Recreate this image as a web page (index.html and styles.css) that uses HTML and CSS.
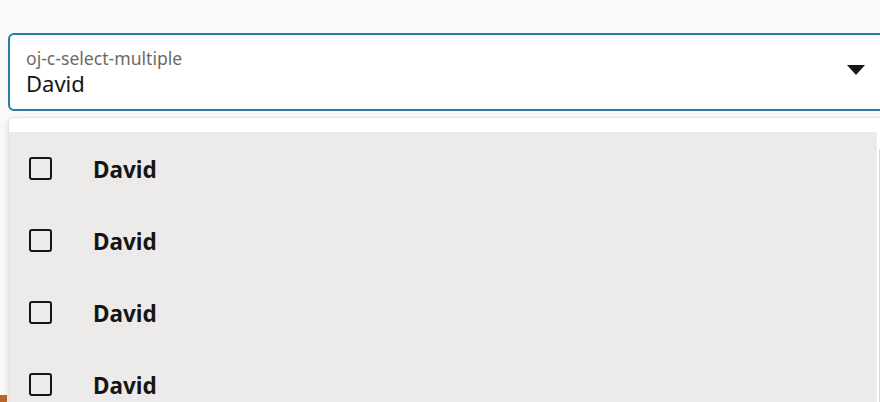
FILE: index.html
```html
<!DOCTYPE html>
<html lang="en">
<head>
<meta charset="utf-8">
<title>oj-c-select-multiple</title>
<link rel="stylesheet" href="styles.css">
</head>
<body>
<div class="page">
  <div class="field">
    <div class="field-text">
      <div class="field-label">oj-c-select-multiple</div>
      <div class="field-value">David</div>
    </div>
    <svg class="arrow" width="18" height="10" viewBox="0 0 18 10"><path d="M0 0 H18 L9 10 Z" fill="#161513"/></svg>
  </div>
  <div class="panel">
    <div class="list">
      <div class="row"><span class="check"></span><span class="name">David</span></div>
      <div class="row"><span class="check"></span><span class="name">David</span></div>
      <div class="row"><span class="check"></span><span class="name">David</span></div>
      <div class="row"><span class="check"></span><span class="name">David</span></div>
    </div>
    <div class="scroll"><div class="thumb"></div></div>
  </div>
  <div class="corner"></div>
</div>
</body>
</html>
```

FILE: styles.css
```css
html, body {
  margin: 0;
  padding: 0;
  background: #faf9f7;
  font-family: "Noto Sans", "Open Sans", sans-serif;
  color: #161513;
}
.page {
  position: relative;
  width: 880px;
  height: 402px;
  overflow: hidden;
  padding: 33px 0 0 8px;
  box-sizing: border-box;
}
.field {
  display: flex;
  align-items: center;
  width: 890px;
  height: 78px;
  box-sizing: border-box;
  border: 2px solid #267fa3;
  border-radius: 6px;
  background: #ffffff;
  padding: 0 31px 0 16px;
}
.field-text {
  flex: 1;
  display: flex;
  flex-direction: column;
  padding-top: 1px;
}
.field-label {
  font-size: 17.6px;
  line-height: 21px;
  color: #6b6a67;
}
.field-value {
  font-size: 22px;
  line-height: 28px;
  color: #161513;
}
.arrow {
  display: block;
  margin-top: -4px;
}
.panel {
  display: flex;
  margin-top: 6px;
  width: 890px;
  height: 300px;
  box-sizing: border-box;
  background: #ffffff;
  border: 1px solid #e6e5e2;
  border-radius: 6px 6px 0 0;
  box-shadow: 0 2px 6px rgba(0,0,0,0.12);
  padding-top: 14px;
}
.list {
  width: 868px;
  background: #ecebe9;
}
.row {
  display: flex;
  align-items: center;
  height: 72px;
  padding-left: 20px;
}
.check {
  width: 23px;
  height: 23px;
  box-sizing: border-box;
  border: 2px solid #161513;
  border-radius: 3px;
  margin-right: 41px;
}
.name {
  font-size: 22.5px;
  font-weight: 700;
  color: #161513;
  padding-top: 2px;
}
.scroll {
  padding: 17px 0 0 2px;
}
.thumb {
  width: 1px;
  height: 300px;
  background: #d6d5d2;
}
.corner {
  position: absolute;
  left: 0;
  top: 395px;
  width: 7px;
  height: 7px;
  background: #b8642a;
}
```
